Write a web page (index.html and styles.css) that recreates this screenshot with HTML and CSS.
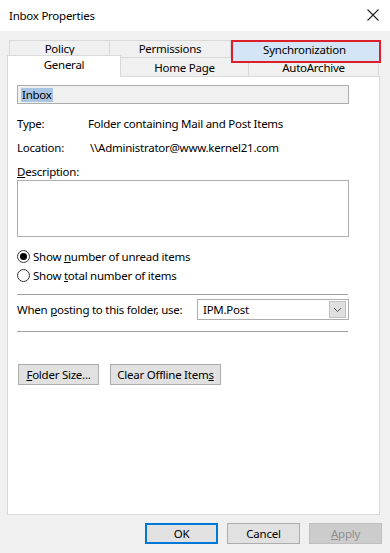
FILE: index.html
```html
<!DOCTYPE html>
<html>
<head>
<meta charset="utf-8">
<link rel="stylesheet" href="styles.css">
</head>
<body>
<div class="dialog">
  <div class="titlebar">
    <span class="title">Inbox Properties</span>
    <svg class="close" width="12" height="12" viewBox="0 0 12 12"><path d="M0.5 0.5 L11.5 11.5 M11.5 0.5 L0.5 11.5" stroke="#222" stroke-width="1.1" fill="none"/></svg>
  </div>
  <div class="content">
    <div class="tabs">
      <div class="row row1">
        <div class="tab t-policy">Policy</div>
        <div class="tab t-perm">Permissions</div>
        <div class="tab t-sync"><span>Synchronization</span></div>
      </div>
      <div class="row row2">
        <div class="tab t-general">General</div>
        <div class="tab t-home">Home Page</div>
        <div class="tab t-auto">AutoArchive</div>
      </div>
    </div>
    <div class="panel">
      <div class="namebox"><span class="sel">Inbox</span></div>
      <div class="info first"><span class="lbl">Type:</span><span class="val">Folder containing Mail and Post Items</span></div>
      <div class="info"><span class="lbl">Location:</span><span class="val loc">\\Administrator@www.kernel21.com</span></div>
      <div class="info"><span><u>D</u>escription:</span></div>
      <div class="desc"></div>
      <div class="radio first-radio"><span class="circle checked"></span><span>Show <u>n</u>umber of unread items</span></div>
      <div class="radio second-radio"><span class="circle"></span><span>Show <u>t</u>otal number of items</span></div>
      <div class="sep sep1"></div>
      <div class="postrow">
        <span class="postlbl">When <u>p</u>osting to this folder, use:</span>
        <div class="select"><span>IPM.Post</span><span class="arrow"><svg width="9" height="6" viewBox="0 0 9 6"><path d="M1 1 L4.5 4.5 L8 1" stroke="#555" stroke-width="1" fill="none"/></svg></span></div>
      </div>
      <div class="sep sep2"></div>
      <div class="btnrow">
        <button class="btn b-size"><u>F</u>older Size...</button>
        <button class="btn b-clear">Clear Offline Item<u>s</u></button>
      </div>
    </div>
    <div class="footer">
      <button class="btn fbtn ok">OK</button>
      <button class="btn fbtn">Cancel</button>
      <button class="btn fbtn disabled"><u>A</u>pply</button>
    </div>
  </div>
</div>
</body>
</html>
```
FILE: styles.css
```css
* { box-sizing: border-box; }
html, body { margin: 0; padding: 0; }
body {
  width: 390px;
  height: 553px;
  background: #f0f0f0;
  font-family: "Noto Sans", "Open Sans", sans-serif;
  font-size: 11.5px;
  letter-spacing: -0.25px;
  color: #000;
  overflow: hidden;
}
.dialog { width: 390px; height: 553px; display: flex; flex-direction: column; }
.titlebar {
  height: 31px;
  background: #fff;
  display: flex;
  align-items: center;
  justify-content: space-between;
  padding: 0 11px 1px 9px;
}
.title { font-size: 11.5px; }
.close { display: block; margin-top: -1px; }

.content { padding: 9px 0 0 7px; }
.tabs { display: flex; flex-direction: column; }
.row { display: flex; }
.row1 { height: 17px; padding-left: 2px; }
.row2 { height: 19px; }
.tab {
  display: flex;
  align-items: center;
  justify-content: center;
  background: #f0f0f0;
  border: 1px solid #d9d9d9;
  border-bottom: none;
  line-height: 1;
  white-space: nowrap;
}
.row1 .tab + .tab { border-left: none; }
.t-policy { width: 101px; }
.t-perm { width: 121px; }
.t-sync { width: 148px; position: relative; z-index: 2; }
.t-sync span { position: relative; z-index: 1; padding-top: 1px; }
.t-sync::before {
  content: "";
  position: absolute;
  left: 0;
  top: -1px;
  right: -3px;
  bottom: -6px;
  background: #d3e5f6;
  border: 2px solid #dc1f2b;
}
.t-general {
  width: 114px;
  background: #fff;
  margin-top: -2px;
  height: 22px;
  position: relative;
  z-index: 1;
  padding-bottom: 3px;
}
.t-home { width: 128px; border-left: none; padding-top: 2px; }
.t-auto { width: 130px; border-left: none; padding-top: 2px; }

.panel {
  width: 373px;
  height: 439px;
  background: #fff;
  border: 1px solid #d9d9d9;
  padding: 0 0 0 9px;
  display: flex;
  flex-direction: column;
}
.namebox {
  margin-top: 8px;
  width: 332px;
  height: 19px;
  background: #f0f0f0;
  border: 1px solid #adadad;
  display: flex;
  align-items: center;
  padding-left: 3px;
}
.sel { background: #a9c5e4; line-height: 14px; padding: 0 1px; }
.info { height: 16px; display: flex; align-items: center; margin-top: 8px; white-space: nowrap; }
.info.first { margin-top: 11px; }
.lbl { width: 71px; }
.loc { margin-left: 2px; }
.desc {
  margin-top: 1px;
  width: 332px;
  height: 57px;
  border: 1px solid #adadad;
  background: #fff;
}
.radio { height: 16px; display: flex; align-items: center; gap: 3px; white-space: nowrap; }
.first-radio { margin-top: 11px; }
.second-radio { margin-top: 3px; }
.circle {
  width: 13px;
  height: 13px;
  flex: none;
  border-radius: 50%;
  border: 1px solid #333;
  display: flex;
  align-items: center;
  justify-content: center;
}
.circle.checked::after {
  content: "";
  width: 7px;
  height: 7px;
  border-radius: 50%;
  background: #000;
}
.sep { width: 331px; height: 1px; background: #a0a0a0; }
.sep1 { margin-top: 11px; }
.sep2 { margin-top: 11px; }
.postrow { margin-top: 4px; height: 21px; display: flex; align-items: center; }
.postlbl { width: 180px; flex: none; white-space: nowrap; }
.select {
  width: 152px;
  height: 21px;
  flex: none;
  border: 1px solid #adadad;
  display: flex;
  align-items: center;
  justify-content: space-between;
  padding: 0 2px 0 5px;
}
.arrow {
  width: 17px;
  height: 17px;
  background: #e0e0e0;
  border: 1px solid #c0c0c0;
  display: flex;
  align-items: center;
  justify-content: center;
}
.arrow svg { display: block; }
.btnrow { margin-top: 32px; display: flex; gap: 11px; padding-left: 1px; }
.btn {
  font-family: inherit;
  font-size: 11.5px;
  letter-spacing: -0.25px;
  color: #000;
  background: #e1e1e1;
  border: 1px solid #adadad;
  height: 21px;
  padding: 0;
  margin: 0;
  display: flex;
  align-items: center;
  justify-content: center;
  line-height: 1;
  white-space: nowrap;
}
.b-size { width: 81px; }
.b-clear { width: 111px; }
.footer {
  display: flex;
  justify-content: flex-end;
  gap: 9px;
  padding-right: 8px;
  margin-top: 8px;
}
.fbtn { width: 73px; height: 21px; }
.ok { border: 2px solid #0078d7; }
.disabled { background: #cccccc; border-color: #bfbfbf; color: #8f8f8f; }
```
